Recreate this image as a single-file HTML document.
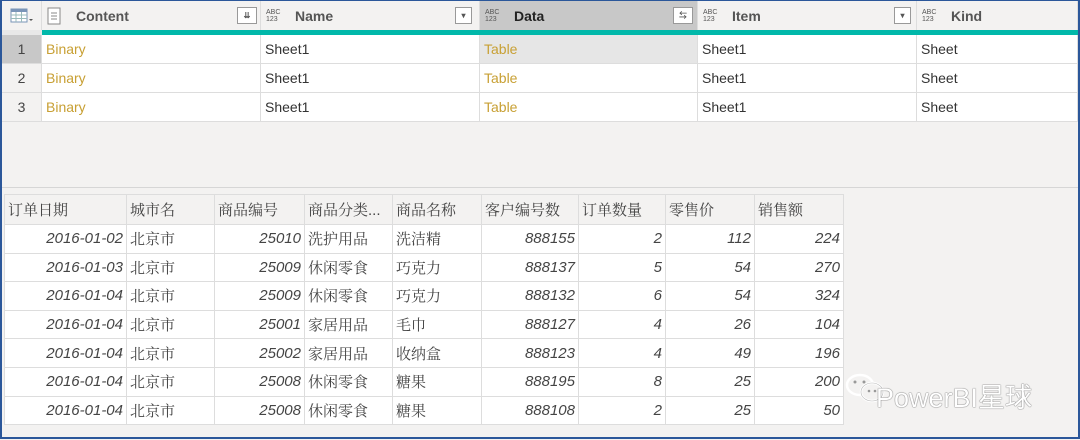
<!DOCTYPE html><html><head><style>
body{margin:0;width:1080px;height:440px;overflow:hidden;background:#f3f2f1;font-family:"Liberation Sans","Noto Sans CJK SC",sans-serif;position:relative}
.frame{position:absolute;left:0;top:0;width:1076px;height:436px;border:2px solid #2b579a;border-top-width:1px}
.a{position:absolute;box-sizing:border-box}
.h{background:#f3f2f1;font-weight:bold;color:#555;font-size:14px;line-height:30px;top:1px;height:30px;border-right:1px solid #ddd}
.c{background:#fff;font-size:14px;color:#333;line-height:28px;padding-left:4px;border-right:1px solid #ddd;border-bottom:1px solid #ddd}
.y{color:#c8a034}
.abc{position:absolute;font-size:7px;line-height:7px;color:#555;font-weight:normal;top:8px}
.dd{position:absolute;top:6px;width:17px;height:17px;border:1px solid #999;background:#fff;box-sizing:border-box;font-size:8px;line-height:15px;text-align:center;color:#555}
table{position:absolute;left:4px;top:194px;border-collapse:collapse;font-size:15px;color:#444}
td{border:1px solid #ddd;padding:0 3px;background:#fff;font-family:"Liberation Sans","Noto Serif CJK SC",serif}
tr{height:28.6px}
tr:first-child{height:30px}
tr:first-child td{background:#f3f2f1}
td.n{text-align:right;font-style:italic;font-family:"Liberation Sans",sans-serif}
</style></head><body>
<div class="frame"></div>
<div class="a h" style="left:2px;width:40px"><svg style="position:absolute;left:8px;top:7px" width="24" height="16"><rect x="1" y="1" width="16" height="13" fill="#fff" stroke="#7a95b8"/><rect x="1" y="1" width="16" height="3" fill="#7a95b8"/><path d="M1 7h16M1 10.5h16M6 4v10M11.5 4v10" stroke="#9bb" /><path d="M19 11l2 2 2-2z" fill="#555"/></svg></div>
<div class="a h" style="left:42px;width:219px;padding-left:34px">Content<svg style="position:absolute;left:5px;top:6px" width="14" height="18"><rect x="1" y="1" width="12" height="16" fill="#fff" stroke="#888"/><path d="M4 6h6M4 9h6M4 12h6" stroke="#888"/></svg><div class="dd" style="left:195px;width:20px">⇊</div></div>
<div class="a h" style="left:261px;width:219px;padding-left:34px">Name<span class="abc" style="left:5px">ABC<br>123</span><div class="dd" style="left:194px">▾</div></div>
<div class="a h" style="left:480px;width:218px;padding-left:34px;background:#c8c8c8;color:#222">Data<span class="abc" style="left:5px">ABC<br>123</span><div class="dd" style="left:193px;width:20px">⇆</div></div>
<div class="a h" style="left:698px;width:219px;padding-left:34px">Item<span class="abc" style="left:5px">ABC<br>123</span><div class="dd" style="left:196px">▾</div></div>
<div class="a h" style="left:917px;width:161px;padding-left:34px">Kind<span class="abc" style="left:5px">ABC<br>123</span></div>
<div class="a" style="left:42px;top:30px;width:1036px;height:5px;background:#01b8aa"></div>
<div class="a" style="left:2px;top:30px;width:40px;height:5px;background:#e8e8e8"></div>
<div class="a c" style="left:2px;top:35px;width:40px;height:29px;background:#c8c8c8;text-align:center;padding:0;color:#444">1</div>
<div class="a c" style="left:2px;top:64px;width:40px;height:29px;background:#f3f2f1;text-align:center;padding:0;color:#444">2</div>
<div class="a c" style="left:2px;top:93px;width:40px;height:29px;background:#f3f2f1;text-align:center;padding:0;color:#444">3</div>

<div class="a c y" style="left:42px;top:35px;width:219px;height:29px">Binary</div>
<div class="a c" style="left:261px;top:35px;width:219px;height:29px">Sheet1</div>
<div class="a c y" style="left:480px;top:35px;width:218px;height:29px;background:#e6e6e6">Table</div>
<div class="a c" style="left:698px;top:35px;width:219px;height:29px">Sheet1</div>
<div class="a c" style="left:917px;top:35px;width:161px;height:29px">Sheet</div>

<div class="a c y" style="left:42px;top:64px;width:219px;height:29px">Binary</div>
<div class="a c" style="left:261px;top:64px;width:219px;height:29px">Sheet1</div>
<div class="a c y" style="left:480px;top:64px;width:218px;height:29px">Table</div>
<div class="a c" style="left:698px;top:64px;width:219px;height:29px">Sheet1</div>
<div class="a c" style="left:917px;top:64px;width:161px;height:29px">Sheet</div>

<div class="a c y" style="left:42px;top:93px;width:219px;height:29px">Binary</div>
<div class="a c" style="left:261px;top:93px;width:219px;height:29px">Sheet1</div>
<div class="a c y" style="left:480px;top:93px;width:218px;height:29px">Table</div>
<div class="a c" style="left:698px;top:93px;width:219px;height:29px">Sheet1</div>
<div class="a c" style="left:917px;top:93px;width:161px;height:29px">Sheet</div>

<div class="a" style="left:2px;top:187px;width:1076px;height:1px;background:#d6d6d6"></div>

<table>
<colgroup><col style="width:122px"><col style="width:88px"><col style="width:90px"><col style="width:88px"><col style="width:89px"><col style="width:97px"><col style="width:87px"><col style="width:89px"><col style="width:89px"></colgroup>
<tr><td>订单日期</td><td>城市名</td><td>商品编号</td><td>商品分类...</td><td>商品名称</td><td>客户编号数</td><td>订单数量</td><td>零售价</td><td>销售额</td></tr>
<tr><td class="n">2016-01-02</td><td>北京市</td><td class="n">25010</td><td>洗护用品</td><td>洗洁精</td><td class="n">888155</td><td class="n">2</td><td class="n">112</td><td class="n">224</td></tr>
<tr><td class="n">2016-01-03</td><td>北京市</td><td class="n">25009</td><td>休闲零食</td><td>巧克力</td><td class="n">888137</td><td class="n">5</td><td class="n">54</td><td class="n">270</td></tr>
<tr><td class="n">2016-01-04</td><td>北京市</td><td class="n">25009</td><td>休闲零食</td><td>巧克力</td><td class="n">888132</td><td class="n">6</td><td class="n">54</td><td class="n">324</td></tr>
<tr><td class="n">2016-01-04</td><td>北京市</td><td class="n">25001</td><td>家居用品</td><td>毛巾</td><td class="n">888127</td><td class="n">4</td><td class="n">26</td><td class="n">104</td></tr>
<tr><td class="n">2016-01-04</td><td>北京市</td><td class="n">25002</td><td>家居用品</td><td>收纳盒</td><td class="n">888123</td><td class="n">4</td><td class="n">49</td><td class="n">196</td></tr>
<tr><td class="n">2016-01-04</td><td>北京市</td><td class="n">25008</td><td>休闲零食</td><td>糖果</td><td class="n">888195</td><td class="n">8</td><td class="n">25</td><td class="n">200</td></tr>
<tr><td class="n">2016-01-04</td><td>北京市</td><td class="n">25008</td><td>休闲零食</td><td>糖果</td><td class="n">888108</td><td class="n">2</td><td class="n">25</td><td class="n">50</td></tr>
</table>
<svg class="a" style="left:842px;top:372px" width="50" height="34"><ellipse cx="18" cy="13" rx="13" ry="10" fill="none" stroke="#fff" stroke-width="2.5"/><ellipse cx="30" cy="20" rx="11" ry="9" fill="#f3f2f1" stroke="#fff" stroke-width="2.5"/><ellipse cx="30" cy="20" rx="11" ry="9" fill="none" stroke="#bbb" stroke-width="0.6"/><circle cx="13" cy="10" r="1.5" fill="#999"/><circle cx="22" cy="10" r="1.5" fill="#999"/><circle cx="27" cy="19" r="1.3" fill="#999"/><circle cx="33" cy="19" r="1.3" fill="#999"/></svg>
<div class="a" style="left:876px;top:376px;font-size:27px;color:#fff;text-shadow:0 0 1px #666,0 0 1px #666;font-family:'Liberation Sans','Noto Sans CJK SC',sans-serif">PowerBI星球</div>
</body></html>
